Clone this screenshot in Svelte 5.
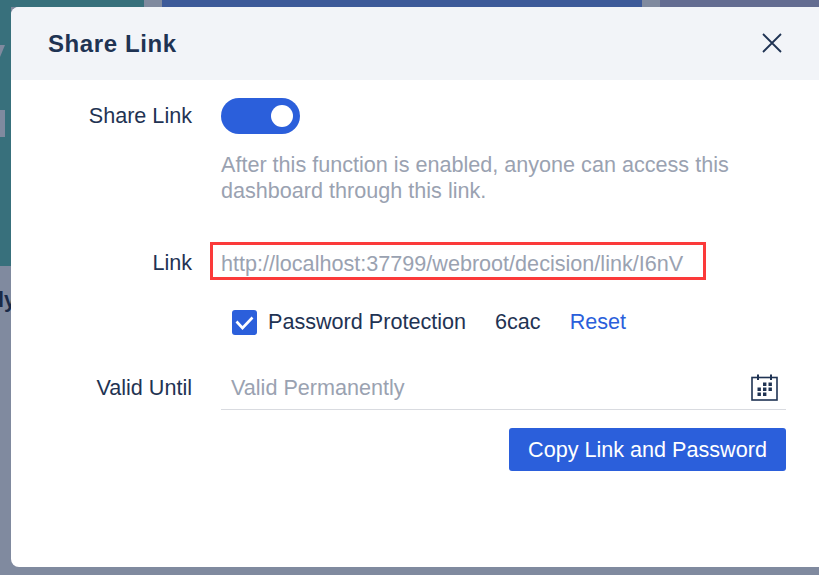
<script>
    let shareOn = $state(true)
    let passwordOn = $state(true)
    const link = 'http://localhost:37799/webroot/decision/link/I6nV'
</script>

<div class="page">
    <div class="backdrop">
        <div class="strip">
            <div class="teal"></div>
            <div class="gap"></div>
            <div class="blue"></div>
            <div class="gap"></div>
            <div class="slate"></div>
        </div>
        <div class="side">
            <span class="v"></span>
            <span class="bar"></span>
        </div>
        <div class="side-low">ly</div>
    </div>

    <div class="modal">
        <header>
            <h1>Share Link</h1>
            <button class="close" aria-label="Close">
                <svg width="20" height="20" viewBox="0 0 20 20">
                    <path d="M1 1 L19 19 M19 1 L1 19" stroke="#1f3353" stroke-width="1.8" fill="none"/>
                </svg>
            </button>
        </header>

        <div class="body">
            <div class="row top">
                <span class="label">Share Link</span>
                <div class="value">
                    <button class="toggle" class:on={shareOn} aria-label="Share Link" onclick={() => shareOn = !shareOn}>
                        <span class="knob"></span>
                    </button>
                    <p class="hint">After this function is enabled, anyone can access this dashboard through this link.</p>
                </div>
            </div>

            <div class="row link-row">
                <span class="label">Link</span>
                <div class="link-box">{link}</div>
            </div>

            <div class="password">
                <button class="check" aria-label="Password Protection" onclick={() => passwordOn = !passwordOn}>
                    <svg width="25" height="25" viewBox="0 0 25 25">
                        <rect width="25" height="25" rx="3" fill="#2b5fdb"/>
                        {#if passwordOn}
                            <path d="M4.5 11.5 L10.5 18 L20.5 7.5" stroke="#fff" stroke-width="2.6" fill="none"/>
                        {/if}
                    </svg>
                </button>
                <span class="pw-label">Password Protection</span>
                <span class="code">6cac</span>
                <span class="reset">Reset</span>
            </div>

            <div class="row valid-row">
                <span class="label">Valid Until</span>
                <div class="date">
                    <span>Valid Permanently</span>
                    <svg width="27" height="27" viewBox="0 0 27 27">
                        <rect x="1" y="3.5" width="25" height="22.5" fill="none" stroke="#1f3353" stroke-width="1.6"/>
                        <path d="M7 0.5 V6 M20 0.5 V6" stroke="#1f3353" stroke-width="2"/>
                        <path fill="#1f3353" d="M12 8.5h3.4v3.4H12zM17.5 8.5h3.4v3.4h-3.4zM6.5 13.5h3.4v3.4H6.5zM12 13.5h3.4v3.4H12zM17.5 13.5h3.4v3.4h-3.4zM6.5 18.5h3.4v3.4H6.5zM12 18.5h3.4v3.4H12z"/>
                    </svg>
                </div>
            </div>

            <div class="actions">
                <button class="copy">Copy Link and Password</button>
            </div>
        </div>
    </div>
</div>

<style>
    :global(body) {
        margin: 0;
        font-family: "Liberation Sans", Arial, sans-serif;
    }

    .page {
        position: relative;
        width: 819px;
        height: 575px;
        overflow: hidden;
        background: #808a9f;
    }

    .strip {
        display: flex;
        height: 7px;
    }

    .teal { width: 144px; background: #38707c; }
    .gap { width: 18px; background: #808a9f; }
    .blue { width: 480px; background: #3d5a99; }
    .slate { flex: 1; background: #636c91; }

    .side {
        width: 11px;
        height: 259px;
        background: #38707c;
        overflow: hidden;
        position: relative;
    }

    .side .v {
        position: absolute;
        top: 38px;
        left: 0;
        width: 5px;
        height: 12px;
        background: #808a9f;
        clip-path: polygon(0 0, 100% 0, 0 100%);
    }

    .side .bar {
        position: absolute;
        top: 103px;
        left: 0;
        width: 5px;
        height: 27px;
        background: #808a9f;
    }

    .side-low {
        position: absolute;
        top: 287px;
        left: -2px;
        color: #1a2a48;
        font-size: 21.6px;
        font-weight: bold;
    }

    .modal {
        position: absolute;
        left: 11px;
        top: 7px;
        width: 808px;
        height: 560px;
        background: #fff;
        border-radius: 8px 0 0 8px;
        overflow: hidden;
        color: #1f3353;
    }

    header {
        display: flex;
        align-items: center;
        justify-content: space-between;
        height: 73px;
        padding: 0 37px;
        box-sizing: border-box;
        background: #f2f4f8;
    }

    h1 {
        margin: 1px 0 0;
        font-size: 24px;
        font-weight: bold;
        letter-spacing: 0.6px;
    }

    .close {
        display: flex;
        padding: 0;
        border: none;
        background: none;
        margin: 0 0 2px;
    }

    .body {
        font-size: 21.6px;
        padding-top: 18px;
    }

    .row {
        display: flex;
    }

    .label {
        width: 181px;
        text-align: right;
        margin-right: 29px;
        flex: none;
    }

    .top .label {
        line-height: 36px;
    }

    .toggle {
        display: block;
        width: 79px;
        height: 36px;
        padding: 0;
        border: none;
        border-radius: 18px;
        background: #c9ced8;
        position: relative;
    }

    .toggle.on { background: #2b5fdb; }

    .knob {
        position: absolute;
        top: 7px;
        right: 7px;
        width: 22px;
        height: 22px;
        border-radius: 50%;
        background: #fff;
    }

    .hint {
        margin: 18px 0 0;
        width: 540px;
        color: #9aa2b1;
        line-height: 26px;
    }

    .link-row {
        margin-top: 38px;
        align-items: center;
    }

    .link-row .label {
        margin-right: 18px;
        margin-top: 4px;
    }

    .link-box {
        width: 496px;
        height: 38px;
        line-height: 38px;
        border: 3px solid #fb3a3a;
        box-sizing: border-box;
        color: #9aa2b1;
        padding: 0 0 0 8px;
        white-space: nowrap;
    }

    .password {
        display: flex;
        align-items: center;
        margin: 29px 0 0 221px;
        height: 26px;
    }

    .check {
        display: flex;
        padding: 0;
        border: none;
        background: none;
        margin-right: 11px;
    }

    .code { margin-left: 29px; }
    .reset { margin-left: 29px; color: #2b5fdb; }

    .valid-row {
        margin-top: 31px;
    }

    .valid-row .label {
        line-height: 44px;
    }

    .date {
        display: flex;
        align-items: center;
        justify-content: space-between;
        width: 565px;
        height: 44px;
        padding: 0 8px 0 10px;
        box-sizing: border-box;
        border-bottom: 1px solid #d9dbe0;
        color: #9aa2b1;
    }

    .actions {
        display: flex;
        justify-content: flex-end;
        width: 775px;
        margin-top: 18px;
    }

    .copy {
        width: 277px;
        height: 43px;
        padding: 0;
        border: none;
        border-radius: 3px;
        background: #2b5fdb;
        color: #fff;
        font: inherit;
    }
</style>
